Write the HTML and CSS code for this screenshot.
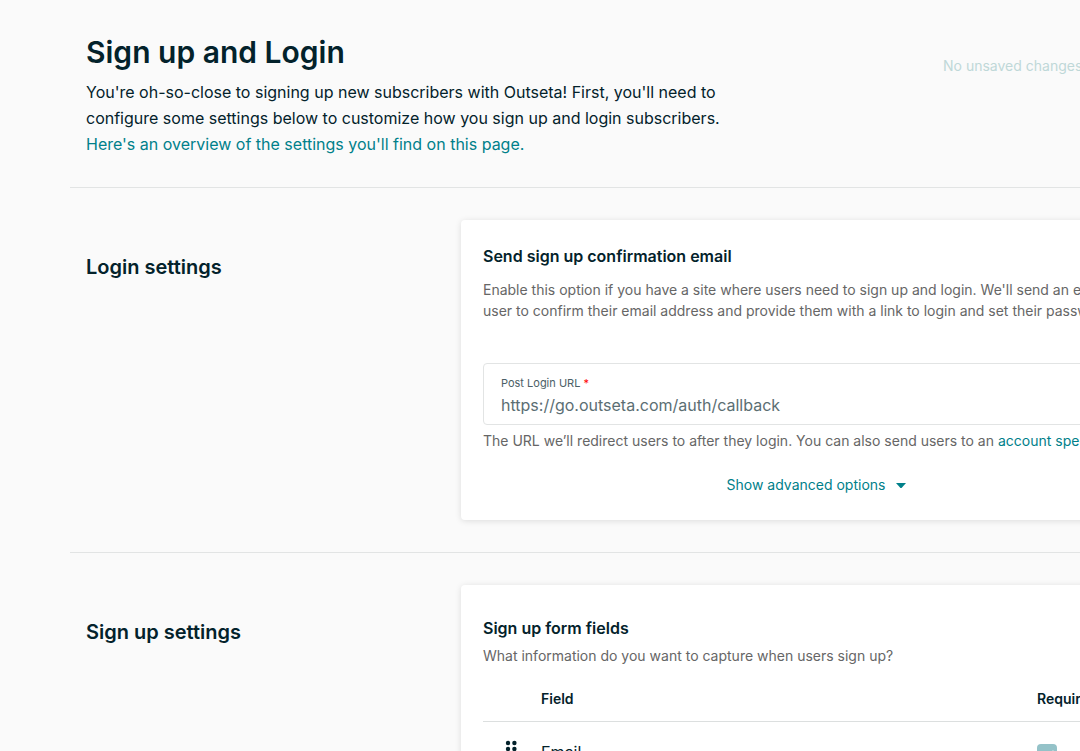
FILE: index.html
```
<!DOCTYPE html>
<html lang="en">
<head>
    <meta charset="UTF-8">
    <meta name="viewport" content="width=device-width, initial-scale=1.0">
    <title>Sign up and Login</title>
    <link rel="stylesheet" href="styles.css">
</head>
<body>
    <main class="page">
        <header class="page-header">
            <div class="intro">
                <h1>Sign up and Login</h1>
                <p>You're oh-so-close to signing up new subscribers with Outseta! First, you'll need to configure some settings below to customize how you sign up and login subscribers. <br><a href="#">Here's an overview of the settings you'll find on this page.</a></p>
            </div>
            <span class="save-status">No unsaved changes</span>
        </header>

        <section class="settings">
            <h2>Login settings</h2>
            <div class="card">
                <h3>Send sign up confirmation email</h3>
                <p class="description">Enable this option if you have a site where users need to sign up and login. We'll send an email to the user to confirm their email address and provide them with a link to login and set their password.</p>
                <div class="field">
                    <label for="postLoginUrl">Post Login URL <span class="required">*</span></label>
                    <input type="text" id="postLoginUrl" value="https://go.outseta.com/auth/callback">
                </div>
                <p class="help">The URL we’ll redirect users to after they login. You can also send users to an <a href="#">account specific URL</a>.</p>
                <button type="button" class="advanced">
                    Show advanced options
                    <svg width="10" height="6" viewBox="0 0 10 6" aria-hidden="true"><path d="M0 0h10L6 4.6Q5 5.6 4 4.6Z" fill="currentColor"/></svg>
                </button>
            </div>
        </section>

        <section class="settings">
            <h2>Sign up settings</h2>
            <div class="card card-fields">
                <h3>Sign up form fields</h3>
                <p class="description">What information do you want to capture when users sign up?</p>
                <table>
                    <thead>
                        <tr>
                            <th class="drag"></th>
                            <th>Field</th>
                            <th class="check">Required</th>
                        </tr>
                    </thead>
                    <tbody>
                        <tr>
                            <td class="drag">
                                <svg width="12" height="24" viewBox="0 0 12 24" fill="currentColor" aria-hidden="true">
                                    <circle cx="3" cy="3" r="2.2"/><circle cx="9.4" cy="3" r="2.2"/>
                                    <circle cx="3" cy="9" r="2.2"/><circle cx="9.4" cy="9" r="2.2"/>
                                    <circle cx="3" cy="15" r="2.2"/><circle cx="9.4" cy="15" r="2.2"/>
                                    <circle cx="3" cy="21" r="2.2"/><circle cx="9.4" cy="21" r="2.2"/>
                                </svg>
                            </td>
                            <td><label for="emailRequired">Email</label></td>
                            <td class="check"><input type="checkbox" id="emailRequired" checked disabled></td>
                        </tr>
                    </tbody>
                </table>
            </div>
        </section>
    </main>
</body>
</html>
```
FILE: styles.css
```
* {
    box-sizing: border-box;
}
body {
    margin: 0;
    font-family: Inter, "Liberation Sans", sans-serif;
    font-size: 14px;
    line-height: 21px;
    background-color: #fafafa;
    color: #03222b;
    overflow-x: hidden;
}
h1, h2, h3, p {
    margin: 0;
}
a {
    color: #00808a;
    text-decoration: none;
}
/* the page runs on past the right edge of a narrow window */
.page {
    margin-left: 70px;
    margin-right: -108px;
}
.page-header {
    display: flex;
    gap: 197px;
    padding: 32px 16px 30px;
}
.intro {
    width: 660px;
    flex: none;
}
.intro h1 {
    font-size: 30px;
    line-height: 40px;
    font-weight: 600;
    margin-bottom: 7px;
}
.intro p {
    font-size: 16px;
    line-height: 26px;
}
.save-status {
    margin-top: 23px;
    white-space: nowrap;
    color: #bfd8d8;
}
.settings {
    display: grid;
    grid-template-columns: 375px minmax(0, 1fr);
    padding: 32px 16px 32px;
    border-top: 1px solid #e2e4e4;
}
.settings h2 {
    font-size: 20px;
    line-height: 28px;
    font-weight: 600;
    margin-top: 33px;
}
.card {
    background-color: #fff;
    border-radius: 4px;
    padding: 24px 22px 25px;
    box-shadow: 0 1px 6px rgba(0, 0, 0, 0.12);
}
.card h3 {
    font-size: 16px;
    line-height: 24px;
    font-weight: 600;
    margin-bottom: 11px;
}
.description, .help {
    color: #666;
}
.field {
    margin-top: 42px;
    margin-bottom: 5px;
    padding: 11px 17px 5px;
    border: 1px solid #e2e4e4;
    border-radius: 4px;
}
.field label {
    display: block;
    font-size: 11px;
    line-height: 16px;
    color: #4b6066;
}
.required {
    color: #ff0000;
}
.field input {
    display: block;
    width: 100%;
    height: 28px;
    padding: 0;
    border: none;
    outline: none;
    background: none;
    font-family: inherit;
    font-size: 16px;
    color: #5b6e73;
}
.advanced {
    display: flex;
    align-items: center;
    gap: 11px;
    margin: 23px auto 0;
    padding: 0;
    border: none;
    background: none;
    font-family: inherit;
    font-size: 14px;
    line-height: 21px;
    color: #00808a;
    cursor: pointer;
}
.advanced svg {
    margin-top: 3px;
}
.card-fields {
    padding-top: 31px;
}
.card-fields h3 {
    margin-bottom: 5px;
}
table {
    width: 100%;
    margin-top: 22px;
    border-collapse: collapse;
    table-layout: fixed;
}
th {
    padding: 0 0 12px;
    font-size: 14px;
    font-weight: 600;
    text-align: left;
}
td {
    height: 61px;
    padding: 0;
    border-top: 1px solid #dcdfdf;
    font-size: 16px;
}
.drag {
    width: 58px;
    padding-left: 22px;
}
.drag svg {
    display: block;
}
.check {
    width: 113px;
}
.check input {
    appearance: none;
    display: block;
    width: 20px;
    height: 20px;
    margin: 4px 0 0;
    border-radius: 4px;
    background: #94c2c8;
}
.check input::before {
    content: "";
    display: block;
    width: 6px;
    height: 11px;
    margin: 0 auto;
    border: solid #fff;
    border-width: 0 2px 2px 0;
    transform: translateY(3px) rotate(45deg);
}
```
